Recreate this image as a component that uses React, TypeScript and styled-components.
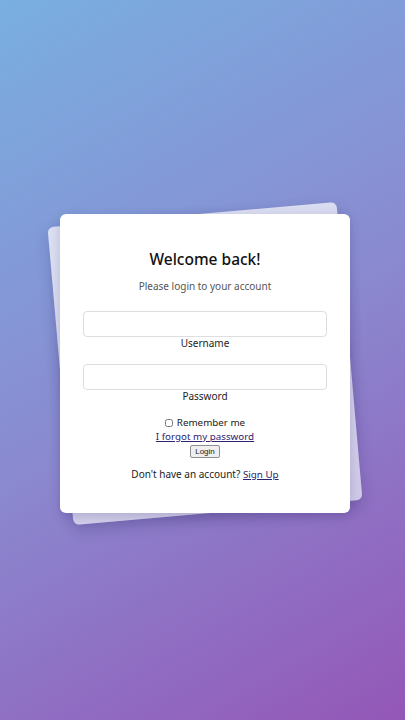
import styled, { createGlobalStyle } from "styled-components"

const Global = createGlobalStyle`
    html, body {
        margin: 0;
        padding: 0;
    }

    body {
        font-family: "Noto Sans", "Open Sans", sans-serif;
        background: linear-gradient(150deg, #79afe1 0%, #8a8ad0 50%, #9457b7 100%);
        min-height: 720px;
    }
`;

export default function App() {
    return (
        <>
            <Global />
            <Page>
                <Stack>
                    <BackCard />
                    <Card>
                        <Title>Welcome back!</Title>
                        <Subtitle>Please login to your account</Subtitle>

                        <Input type="text" />
                        <Label>Username</Label>

                        <Input type="password" $gap={15} />
                        <Label>Password</Label>

                        <Remember>
                            <input type="checkbox" />
                            <span>Remember me</span>
                        </Remember>
                        <Link href="#">I forgot my password</Link>
                        <Button>Login</Button>

                        <SignUp>
                            Don't have an account? <Link href="#">Sign Up</Link>
                        </SignUp>
                    </Card>
                </Stack>
            </Page>
        </>
    )
}

const Page = styled.main`
    height: 720px;
    display: flex;
    align-items: center;
    justify-content: center;
`;

const Stack = styled.div`
    position: relative;
    width: 290px;
    height: 299px;
    margin-left: 5px;
    margin-top: 7px;
`;

const BackCard = styled.div`
    position: absolute;
    inset: 0;
    transform: rotate(-5deg);
    border-radius: 6px;
    background: linear-gradient(160deg, #eceef8 0%, #dcdaf0 100%);
    opacity: 0.85;
    box-shadow: rgba(40, 30, 90, 0.25) 0px 6px 14px;
`;

const Card = styled.div`
    position: relative;
    box-sizing: border-box;
    height: 100%;
    background: #fff;
    border-radius: 6px;
    padding: 35px 23px 0;
    display: flex;
    flex-direction: column;
    align-items: center;
    box-shadow: rgba(40, 30, 90, 0.2) 0px 4px 12px;
`;

const Title = styled.h2`
    margin: 0;
    font-size: 15.5px;
    line-height: 20px;
    font-weight: 500;
    color: #111;
`;

const Subtitle = styled.p`
    margin: 10px 0 0;
    font-size: 10px;
    line-height: 14px;
    color: #555;
`;

const Input = styled.input<{ $gap?: number }>`
    box-sizing: border-box;
    width: 100%;
    height: 26px;
    margin-top: ${p => p.$gap ?? 18}px;
    border: 1px solid #dedede;
    border-radius: 4px;
    outline: none;
`;

const Label = styled.label`
    font-size: 10px;
    line-height: 12px;
    color: #222;
`;

const Remember = styled.div`
    margin-top: 14px;
    display: flex;
    align-items: center;
    gap: 4px;
    font-size: 9.8px;
    line-height: 14px;
    color: #222;

    input {
        margin: 0;
        width: 8px;
        height: 8px;
    }
`;

const Link = styled.a`
    font-size: 9.8px;
    line-height: 14px;
    color: #2e2370;
    text-decoration: underline;
`;

const Button = styled.button`
    margin-top: 1px;
    height: 13px;
    padding: 0 4px;
    font-family: "Liberation Sans", sans-serif;
    font-size: 8px;
    line-height: 11px;
    color: #222;
    background: #efefef;
    border: 1px solid #8f8f8f;
    border-radius: 2px;
`;

const SignUp = styled.p`
    margin: 9px 0 0;
    font-size: 10px;
    line-height: 14px;
    color: #222;
`;
